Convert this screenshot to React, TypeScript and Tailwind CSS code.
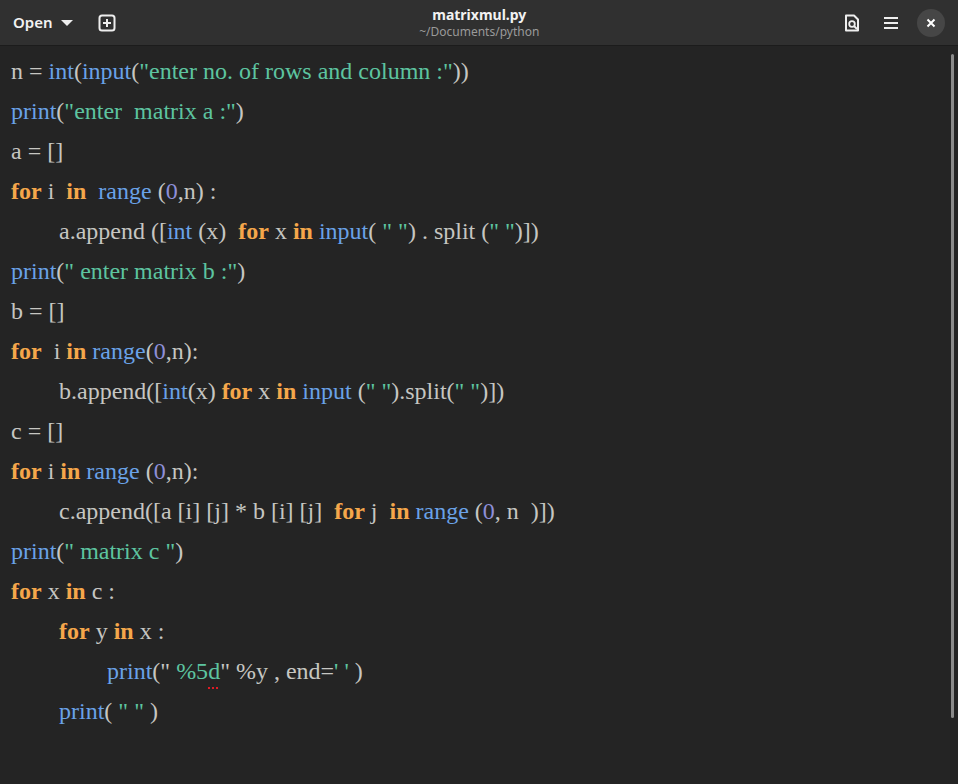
import React from "react";

type Tok = [string, string];
const C: Record<string, string> = {
  t: "text-[#c6c6c2]",
  k: "text-[#f5a74b] font-bold",
  f: "text-[#6aa2e8]",
  s: "text-[#5dc4a0]",
  n: "text-[#8e8fd8]",
};

const lines: { ind: number; toks: Tok[] }[] = [
  { ind: 0, toks: [["t", "n = "], ["f", "int"], ["t", "("], ["f", "input"], ["t", "("], ["s", "\"enter no. of rows and column :\""], ["t", "))"]] },
  { ind: 0, toks: [["f", "print"], ["t", "("], ["s", "\"enter  matrix a :\""], ["t", ")"]] },
  { ind: 0, toks: [["t", "a = []"]] },
  { ind: 0, toks: [["k", "for"], ["t", " i  "], ["k", "in"], ["t", "  "], ["f", "range"], ["t", " ("], ["n", "0"], ["t", ",n) :"]] },
  { ind: 1, toks: [["t", "a.append (["], ["f", "int"], ["t", " (x)  "], ["k", "for"], ["t", " x "], ["k", "in"], ["t", " "], ["f", "input"], ["t", "( "], ["s", "\" \""], ["t", ") . split ("], ["s", "\" \""], ["t", ")])"]] },
  { ind: 0, toks: [["f", "print"], ["t", "("], ["s", "\" enter matrix b :\""], ["t", ")"]] },
  { ind: 0, toks: [["t", "b = []"]] },
  { ind: 0, toks: [["k", "for"], ["t", "  i "], ["k", "in"], ["t", " "], ["f", "range"], ["t", "("], ["n", "0"], ["t", ",n):"]] },
  { ind: 1, toks: [["t", "b.append(["], ["f", "int"], ["t", "(x) "], ["k", "for"], ["t", " x "], ["k", "in"], ["t", " "], ["f", "input"], ["t", " ("], ["s", "\" \""], ["t", ").split("], ["s", "\" \""], ["t", ")])"]] },
  { ind: 0, toks: [["t", "c = []"]] },
  { ind: 0, toks: [["k", "for"], ["t", " i "], ["k", "in"], ["t", " "], ["f", "range"], ["t", " ("], ["n", "0"], ["t", ",n):"]] },
  { ind: 1, toks: [["t", "c.append([a [i] [j] * b [i] [j]  "], ["k", "for"], ["t", " j  "], ["k", "in"], ["t", " "], ["f", "range"], ["t", " ("], ["n", "0"], ["t", ", n  )])"]] },
  { ind: 0, toks: [["f", "print"], ["t", "("], ["s", "\" matrix c \""], ["t", ")"]] },
  { ind: 0, toks: [["k", "for"], ["t", " x "], ["k", "in"], ["t", " c :"]] },
  { ind: 1, toks: [["k", "for"], ["t", " y "], ["k", "in"], ["t", " x :"]] },
  { ind: 2, toks: [["f", "print"], ["t", "(\" "], ["s", "%5"], ["x", "d"], ["t", "\" %y , end="], ["s", "' '"], ["t", " )"]] },
  { ind: 1, toks: [["f", "print"], ["t", "( "], ["s", "\" \""], ["t", " )"]] },
];

export default function App() {
  return (
    <div className="w-[958px] h-[784px] bg-[#242424] flex flex-col overflow-hidden" style={{ fontFamily: "'Liberation Serif', serif" }}>
      <div className="h-[46px] bg-[#303030] border-b border-[#1c1c1c] flex items-center px-[13px] text-[#f2f2f2]" style={{ fontFamily: "'Noto Sans', sans-serif" }}>
        <div className="flex items-center gap-[8px] text-[15px] font-semibold">
          <span>Open</span>
          <svg width="12" height="8" viewBox="0 0 12 8"><path d="M0 1h12L6 7z" fill="#eee" /></svg>
        </div>
        <svg className="ml-[25px]" width="18" height="18" viewBox="0 0 18 18"><rect x="1.5" y="1.5" width="15" height="15" rx="2.5" fill="none" stroke="#eee" strokeWidth="2" /><path d="M9 5v8M5 9h8" stroke="#eee" strokeWidth="2" /></svg>
        <div className="flex-1 flex flex-col items-center leading-tight">
          <span className="text-[14px] font-bold">matrixmul.py</span>
          <span className="text-[12px] text-[#9a9a9a]">~/Documents/python</span>
        </div>
        <svg width="18" height="18" viewBox="0 0 18 18"><path d="M3 1.5h8l4 4v11H3z" fill="none" stroke="#eee" strokeWidth="2" strokeLinejoin="round" /><circle cx="9" cy="10" r="2.8" fill="none" stroke="#eee" strokeWidth="1.8" /><path d="M11 12l3 3" stroke="#eee" strokeWidth="2" /></svg>
        <div className="ml-[22px]"><svg width="16" height="14" viewBox="0 0 16 14"><path d="M1 2h14M1 7h14M1 12h14" stroke="#eee" strokeWidth="2" /></svg></div>
        <div className="ml-[18px] w-[28px] h-[28px] rounded-full bg-[#464646] flex items-center justify-center">
          <svg width="10" height="10" viewBox="0 0 10 10"><path d="M1.5 1.5l7 7M8.5 1.5l-7 7" stroke="#fff" strokeWidth="2" /></svg>
        </div>
      </div>
      <div className="flex-1 flex">
        <div className="flex-1 pl-[11px] pt-[5px]">
          {lines.map((l, i) => (
            <div key={i} className="h-[40px] flex items-center text-[24px] whitespace-pre" style={{ paddingLeft: l.ind * 48 }}>
              {l.toks.map(([c, s], j) =>
                c === "x" ? (
                  <span key={j} className="text-[#5dc4a0] underline decoration-dotted decoration-[#e01b24] decoration-2 underline-offset-[8px]">{s}</span>
                ) : (
                  <span key={j} className={C[c]}>{s}</span>
                )
              )}
            </div>
          ))}
        </div>
        <div className="w-[6px] mr-[1px] pt-[8px] pb-[66px]">
          <div className="h-full w-[3px] bg-[#8a8a8a] rounded-full" />
        </div>
      </div>
    </div>
  );
}
